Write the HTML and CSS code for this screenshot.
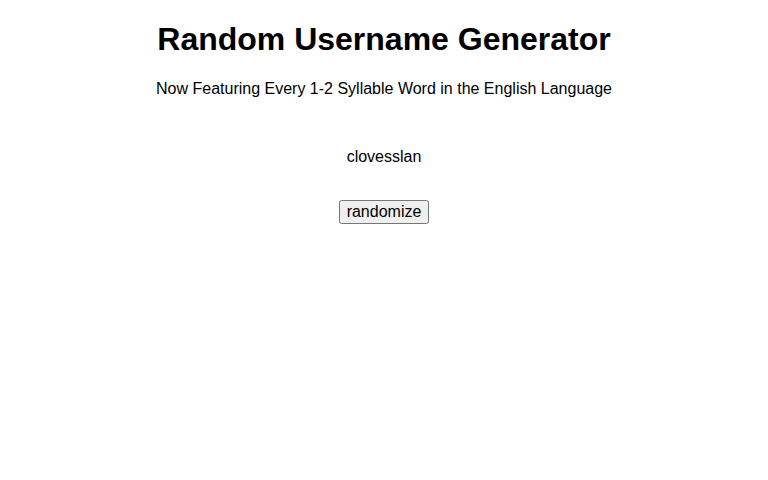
FILE: index.html
```html
<!DOCTYPE html>
<html>
<head>
<meta charset="utf-8">
<title>Random Username Generator</title>
<link rel="stylesheet" href="styles.css">
</head>
<body class="page">
<h1 class="title">Random Username Generator</h1>
<p class="subtitle">Now Featuring Every 1-2 Syllable Word in the English Language</p>
<br>
<p class="username">clovesslan</p>
<br>
<button class="randomize" type="button">randomize</button>
</body>
</html>
```
FILE: styles.css
```css
html {
  margin: 0;
  padding: 0;
}
.page {
  margin: 0 8px;
  font-family: "Liberation Sans", Arial, sans-serif;
  font-size: 16px;
  text-align: center;
  color: #000;
  background: #fff;
}
.title {
  font-size: 32px;
  font-weight: bold;
  margin: 21.44px 0;
}
.subtitle,
.username {
  margin: 16px 0;
}
.randomize {
  font-family: "Liberation Sans", Arial, sans-serif;
  font-size: 16px;
}
```
